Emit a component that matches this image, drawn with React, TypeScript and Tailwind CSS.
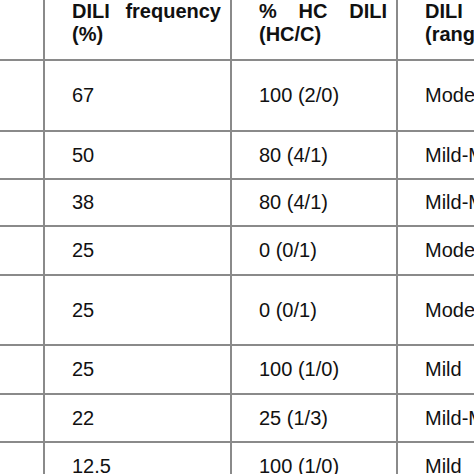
const header = ["", "DILI frequency (%)", "% HC DILI (HC/C)", "DILI severity (range)"];

const rows: { h: string; freq: string; hc: string; sev: string }[] = [
  { h: "h-[71px]", freq: "67", hc: "100 (2/0)", sev: "Moderate" },
  { h: "h-[48px]", freq: "50", hc: "80 (4/1)", sev: "Mild-Moderate" },
  { h: "h-[47px]", freq: "38", hc: "80 (4/1)", sev: "Mild-Moderate" },
  { h: "h-[49px]", freq: "25", hc: "0 (0/1)", sev: "Moderate" },
  { h: "h-[70px]", freq: "25", hc: "0 (0/1)", sev: "Moderate" },
  { h: "h-[49px]", freq: "25", hc: "100 (1/0)", sev: "Mild" },
  { h: "h-[48px]", freq: "22", hc: "25 (1/3)", sev: "Mild-Moderate" },
  { h: "h-[48px]", freq: "12.5", hc: "100 (1/0)", sev: "Mild" },
];

const cell = "border-2 border-[#8a8a8a] pl-[27px] pr-[9px] align-middle";

export default function App() {
  return (
    <div
      className="w-[474px] h-[474px] overflow-hidden bg-white text-[#111] text-[20px] leading-[23px]"
      style={{ fontFamily: '"Liberation Sans", Arial, sans-serif' }}
    >
      <table className="table-fixed border-collapse w-[560px]">
        <colgroup>
          <col className="w-[44px]" />
          <col className="w-[187px]" />
          <col className="w-[166px]" />
          <col className="w-[163px]" />
        </colgroup>
        <thead>
          <tr className="h-[60px]">
            {header.map((t, i) => (
              <th
                key={i}
                className={`${cell} border-t-0 align-top pt-0 text-justify font-bold ${
                  i === 0 ? "border-l-0" : ""
                }`}
              >
                {t}
              </th>
            ))}
          </tr>
        </thead>
        <tbody>
          {rows.map((r, i) => (
            <tr key={i} className={r.h}>
              <td className={`${cell} border-l-0`}></td>
              <td className={cell}>{r.freq}</td>
              <td className={cell}>{r.hc}</td>
              <td className={`${cell} whitespace-nowrap`}>{r.sev}</td>
            </tr>
          ))}
        </tbody>
      </table>
    </div>
  );
}
